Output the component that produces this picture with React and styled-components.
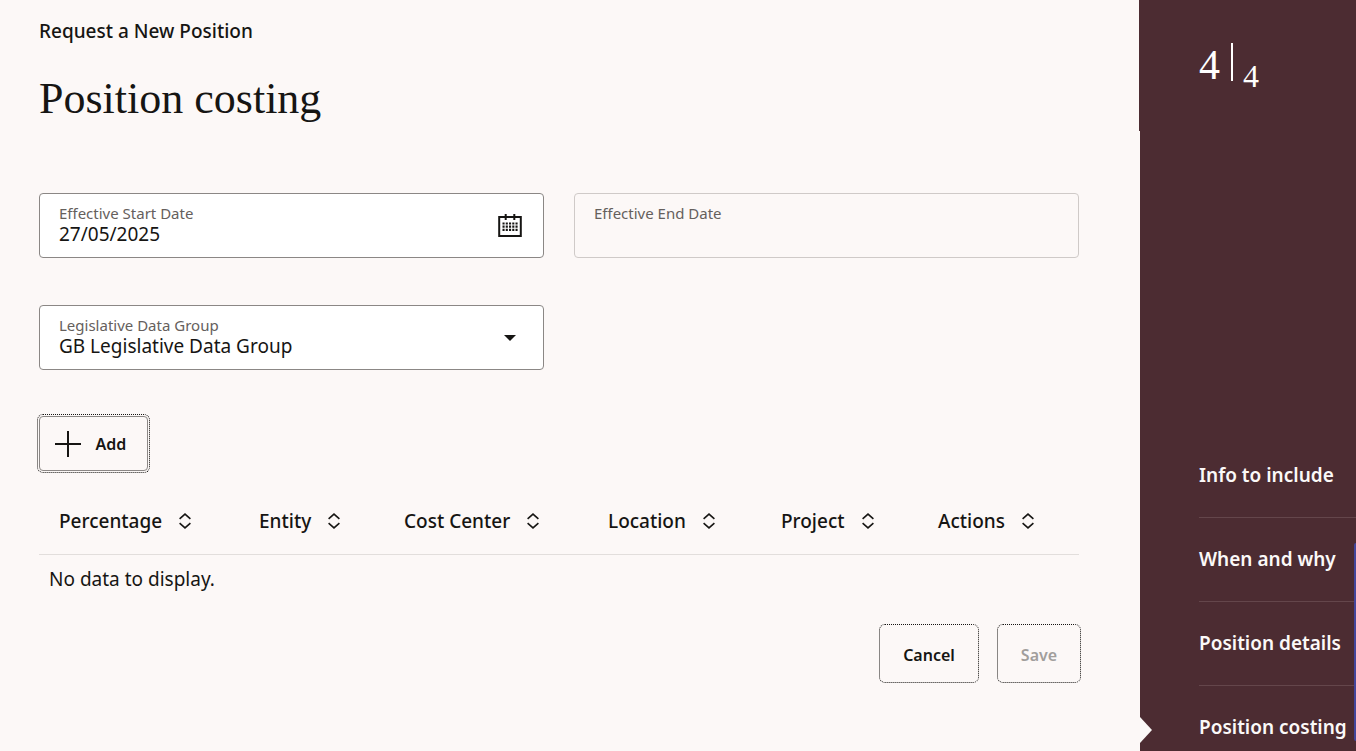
import React from "react";
import styled, { createGlobalStyle } from "styled-components";

const GlobalStyle = createGlobalStyle`
  * {
    box-sizing: border-box;
  }
  body {
    margin: 0;
    background: #fcf8f7;
    color: #161513;
    font-family: "Noto Sans", "Open Sans", sans-serif;
    font-size: 19px;
  }
  button, input, select {
    font: inherit;
    color: inherit;
  }
`

const Page = styled.div`
  display: flex;
  height: 100vh;
  overflow: hidden;
`

const Main = styled.main`
  flex: 1;
  min-width: 0;
  padding: 17px 61px 0 39px;
`

const FlowName = styled.p`
  margin: 0;
  font-weight: 500;
  line-height: 28px;
`

const Title = styled.h1`
  margin: 28px 0 68px;
  font-family: Georgia, "Liberation Serif", serif;
  font-size: 44px;
  font-weight: 400;
  line-height: 52px;
`

const Fields = styled.div`
  display: grid;
  grid-template-columns: 1fr 1fr;
  gap: 47px 30px;
`

const Field = styled.div`
  display: flex;
  align-items: center;
  height: 65px;
  padding: 0 21px 0 19px;
  border: 1px solid ${({ $disabled }) => ($disabled ? "#cfcac8" : "#8b8785")};
  border-radius: 4px;
  background: ${({ $disabled }) => ($disabled ? "transparent" : "#fff")};
`

const FieldText = styled.div`
  display: flex;
  flex: 1;
  flex-direction: column;
  min-width: 0;
`

const Label = styled.label`
  color: #65605d;
  font-size: 15px;
  line-height: 16px;
`

const Input = styled.input`
  width: 100%;
  height: 26px;
  padding: 0;
  border: 0;
  background: transparent;
  outline: none;
`

const Select = styled.select`
  width: 100%;
  height: 26px;
  padding: 0;
  border: 0;
  background: transparent;
  line-height: 26px;
  appearance: none;
  outline: none;
`

const IconButton = styled.button`
  display: flex;
  padding: 0;
  border: 0;
  background: none;
`

const Button = styled.button`
  display: flex;
  align-items: center;
  justify-content: center;
  gap: 15px;
  min-width: ${({ $width }) => $width}px;
  height: 55px;
  padding: 0 6px 0 0;
  border: 1px solid ${({ $bordered }) => ($bordered ? "#8b8785" : "transparent")};
  border-radius: 4px;
  outline: 1px dotted #161513;
  outline-offset: 1px;
  background: transparent;
  font-size: 16px;
  font-weight: 600;

  &:disabled {
    color: #a19e9c;
  }
`

const Toolbar = styled.div`
  display: flex;
  padding: 46px 0 18px;
`

const Footer = styled.div`
  display: flex;
  justify-content: flex-end;
  gap: 22px;
  padding-top: 23px;

  button {
    padding: 2px 0 0;
  }
`

const Table = styled.table`
  width: 100%;
  table-layout: fixed;
  border-collapse: collapse;
`

const HeadCell = styled.th`
  width: ${({ $width }) => $width}px;
  height: 65px;
  padding: 0 0 0 20px;
  border-bottom: 1px solid #e2dedc;
  text-align: left;
`

const SortButton = styled.button`
  display: flex;
  align-items: center;
  gap: 17px;
  padding: 0;
  border: 0;
  background: none;
  font-weight: 500;
  white-space: nowrap;
`

const EmptyCell = styled.td`
  height: 49px;
  padding: 0 10px;
`

const Sidebar = styled.aside`
  position: relative;
  display: flex;
  flex-direction: column;
  width: 216px;
  background: #4c2c32;
  color: #fbf9f8;
`

const Steps = styled.div`
  display: flex;
  align-items: flex-start;
  height: 131px;
  margin-left: -1px;
  padding: 43px 0 0 60px;
  background: #4c2c32;
  color: #fff;
  font-family: Georgia, "Liberation Serif", serif;
`

const Current = styled.span`
  font-size: 42px;
  line-height: 44px;
`

const Divider = styled.span`
  width: 2px;
  height: 38px;
  margin: 0 10px 0 11px;
  background: #fff;
`

const Total = styled.span`
  padding-top: 16px;
  font-size: 32px;
  line-height: 34px;
`

const StepList = styled.ol`
  margin: auto 0 0;
  padding: 0 0 0 59px;
  list-style: none;
`

const Step = styled.li`
  height: 84px;
  padding-top: 29px;
  border-bottom: 1px solid #64464b;
  line-height: 24px;

  &:last-child {
    height: 65px;
    border: 0;
  }
`

const StepLink = styled.a`
  color: inherit;
  font-weight: 600;
  text-decoration: none;
  white-space: nowrap;
`

const Pointer = styled.span`
  position: absolute;
  bottom: 8px;
  left: 0;
  border: solid transparent;
  border-width: 13px 0 13px 12px;
  border-left-color: #fbf9f8;
`

const HelpTab = styled.button`
  position: absolute;
  right: 0;
  bottom: 10px;
  width: 2px;
  height: 198px;
  padding: 0;
  border: 0;
  border-radius: 2px 0 0 2px;
  background: #43469b;
`

const CalendarIcon = () => (
  <svg width="24" height="24" viewBox="0 0 24 24" fill="none" stroke="#161513" aria-hidden="true">
    <path d="M1.2 3H22.8V22H1.2Z" strokeWidth="2" />
    <path d="M7.7 0V6M16.3 0V6" strokeWidth="2" />
    <path d="M4.5 9.5H20M4.5 12.7H20M4.5 15.9H20" strokeWidth="2.2" strokeDasharray="2.1 1.15" />
  </svg>
)

const CaretIcon = () => (
  <svg width="24" height="24" viewBox="0 0 24 24" fill="#161513" aria-hidden="true">
    <path d="M6 9H18L12 15Z" />
  </svg>
)

const PlusIcon = () => (
  <svg width="26" height="26" viewBox="0 0 26 26" stroke="#161513" strokeWidth="2" aria-hidden="true">
    <path d="M13 0V26M0 13H26" />
  </svg>
)

const SortIcon = () => (
  <svg width="12" height="16" viewBox="0 0 12 16" fill="none" stroke="#161513" strokeWidth="1.6" aria-hidden="true">
    <path d="M0.6 5.9L6 1.1L11.4 5.9M0.6 10.1L6 14.9L11.4 10.1" />
  </svg>
)

const columns = [
  { name: "Percentage", width: 200 },
  { name: "Entity", width: 145 },
  { name: "Cost Center", width: 204 },
  { name: "Location", width: 173 },
  { name: "Project", width: 157 },
  { name: "Actions", width: 161 },
]

const steps = ["Info to include", "When and why", "Position details", "Position costing"]

const App = () => (
  <Page>
    <GlobalStyle />
    <Main>
      <FlowName>Request a New Position</FlowName>
      <Title>Position costing</Title>
      <Fields>
        <Field>
          <FieldText>
            <Label htmlFor="start-date">Effective Start Date</Label>
            <Input id="start-date" defaultValue="27/05/2025" />
          </FieldText>
          <IconButton type="button" aria-label="Select date">
            <CalendarIcon />
          </IconButton>
        </Field>
        <Field $disabled>
          <FieldText>
            <Label htmlFor="end-date">Effective End Date</Label>
            <Input id="end-date" disabled />
          </FieldText>
        </Field>
        <Field>
          <FieldText>
            <Label htmlFor="data-group">Legislative Data Group</Label>
            <Select id="data-group">
              <option>GB Legislative Data Group</option>
            </Select>
          </FieldText>
          <CaretIcon />
        </Field>
      </Fields>
      <Toolbar>
        <Button type="button" $width={109} $bordered>
          <PlusIcon />
          Add
        </Button>
      </Toolbar>
      <Table>
        <thead>
          <tr>
            {columns.map(({ name, width }) => (
              <HeadCell key={name} $width={width}>
                <SortButton type="button">
                  {name}
                  <SortIcon />
                </SortButton>
              </HeadCell>
            ))}
          </tr>
        </thead>
        <tbody>
          <tr>
            <EmptyCell colSpan={columns.length}>No data to display.</EmptyCell>
          </tr>
        </tbody>
      </Table>
      <Footer>
        <Button type="button" $width={96}>Cancel</Button>
        <Button type="button" $width={80} disabled>Save</Button>
      </Footer>
    </Main>
    <Sidebar>
      <Steps>
        <Current>4</Current>
        <Divider />
        <Total>4</Total>
      </Steps>
      <StepList>
        {steps.map((step) => (
          <Step key={step}>
            <StepLink href="#">{step}</StepLink>
          </Step>
        ))}
      </StepList>
      <Pointer />
      <HelpTab type="button" aria-label="Help" />
    </Sidebar>
  </Page>
)

export default App
